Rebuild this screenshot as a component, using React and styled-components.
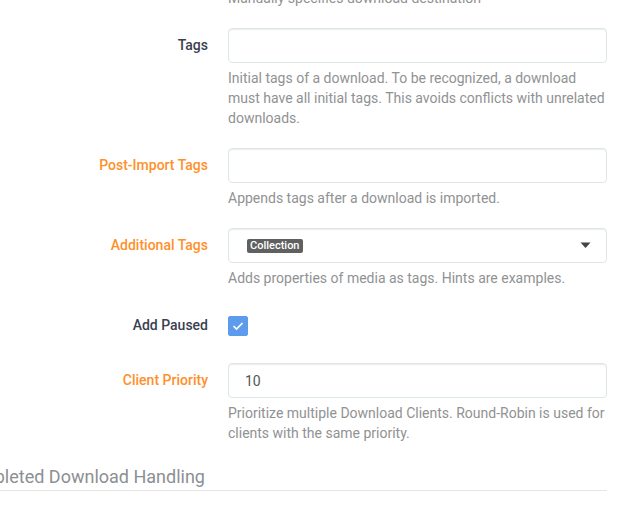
import React from "react";
import styled, { createGlobalStyle } from "styled-components";

const Global = createGlobalStyle`
  html, body { margin: 0; padding: 0; background: #fff; overflow: hidden; }
  body { font-family: Roboto, "Noto Sans", "Liberation Sans", sans-serif; font-size: 14px; color: #515253; }
  * { box-sizing: border-box; }
`;

const Page = styled.div`
  width: 649px;
  margin-left: -42px;
  display: flex;
  flex-direction: column;
`;

const Group = styled.div`
  display: flex;
  align-items: flex-start;
  margin-bottom: 20px;
`;

const Label = styled.div`
  flex: 0 0 250px;
  margin-right: 20px;
  text-align: right;
  font-weight: 500;
  line-height: 35px;
  font-size: 14px;
  color: ${(p) => (p.$advanced ? "#ff902b" : "#3a3f51")};
`;

const InputCol = styled.div`
  flex: 1 1 auto;
  display: flex;
  flex-direction: column;
`;

const Input = styled.input`
  height: 35px;
  width: 100%;
  padding: 6px 16px;
  border: 1px solid #dde6e9;
  border-radius: 4px;
  background: #fff;
  box-shadow: inset 0 1px 1px rgba(0, 0, 0, 0.075);
  font-family: inherit;
  font-size: 14px;
  color: #555;
  outline: none;
`;

const Select = styled.div`
  height: 35px;
  display: flex;
  align-items: center;
  justify-content: space-between;
  padding: 0 15px 0 18px;
  border: 1px solid #dde6e9;
  border-radius: 4px;
  background: #fff;
  box-shadow: inset 0 1px 1px rgba(0, 0, 0, 0.075);
`;

const Tag = styled.span`
  display: inline-block;
  padding: 0 3px;
  border-radius: 2px;
  background: #606060;
  color: #fff;
  font-size: 11px;
  font-weight: 500;
  line-height: 14px;
`;

const Help = styled.div`
  margin-top: 5px;
  line-height: 20px;
  color: #909293;
  font-size: 14px;
`;

const TopHelp = styled(Help)`
  margin-top: -12px;
  margin-left: 270px;
  margin-bottom: 20px;
`;

const CheckRow = styled.div`
  height: 35px;
  display: flex;
  align-items: center;
`;

const Checkbox = styled.span`
  width: 20px;
  height: 20px;
  border-radius: 2px;
  background: #5d9cec;
  border: 1px solid #5d9cec;
  display: flex;
  align-items: center;
  justify-content: center;
`;

const Legend = styled.div`
  margin-left: -1px;
  font-size: 18px;
  line-height: 23px;
  padding-top: 2px;
  padding-bottom: 2px;
  color: #8c8f93;
  border-bottom: 1px solid #e5e5e5;
`;

const Caret = () => (
  <svg width="11" height="7" viewBox="0 0 11 7">
    <path d="M0.5 0.5 L10.5 0.5 L5.5 6 Z" fill="#444" />
  </svg>
);

const Check = () => (
  <svg width="12" height="10" viewBox="0 0 12 10">
    <path d="M1.5 5 L4.5 8 L10.5 2" fill="none" stroke="#fff" strokeWidth="1.7" />
  </svg>
);

export default function App() {
  return (
    <>
      <Global />
      <Page>
        <TopHelp>Manually specifies download destination</TopHelp>

        <Group>
          <Label>Tags</Label>
          <InputCol>
            <Input type="text" defaultValue="" />
            <Help>
              Initial tags of a download. To be recognized, a download must have all initial tags. This avoids conflicts with unrelated downloads.
            </Help>
          </InputCol>
        </Group>

        <Group>
          <Label $advanced>Post-Import Tags</Label>
          <InputCol>
            <Input type="text" defaultValue="" />
            <Help>Appends tags after a download is imported.</Help>
          </InputCol>
        </Group>

        <Group>
          <Label $advanced>Additional Tags</Label>
          <InputCol>
            <Select>
              <Tag>Collection</Tag>
              <Caret />
            </Select>
            <Help>Adds properties of media as tags. Hints are examples.</Help>
          </InputCol>
        </Group>

        <Group>
          <Label>Add Paused</Label>
          <InputCol>
            <CheckRow>
              <Checkbox>
                <Check />
              </Checkbox>
            </CheckRow>
          </InputCol>
        </Group>

        <Group>
          <Label $advanced>Client Priority</Label>
          <InputCol>
            <Input type="text" defaultValue="10" />
            <Help>
              Prioritize multiple Download Clients. Round-Robin is used for clients with the same priority.
            </Help>
          </InputCol>
        </Group>

        <Legend>Completed Download Handling</Legend>
      </Page>
    </>
  );
}
